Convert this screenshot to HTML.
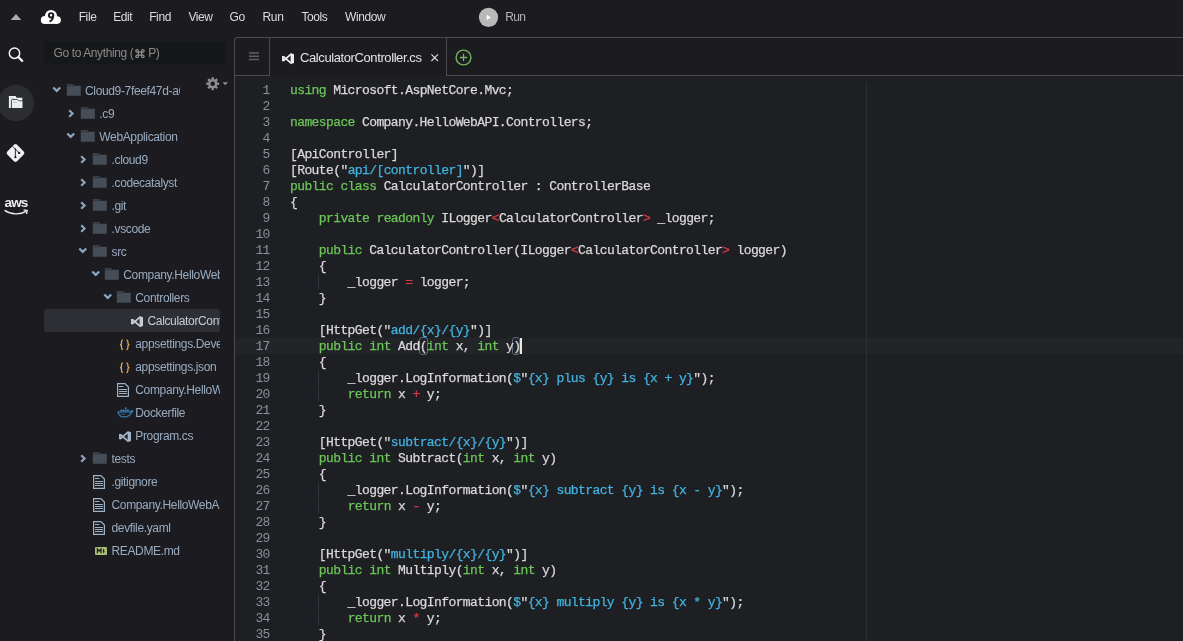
<!DOCTYPE html>
<html><head><meta charset="utf-8">
<style>
*{margin:0;padding:0;box-sizing:border-box}
html,body{width:1183px;height:641px;overflow:hidden;background:#1c1c20;font-family:"Liberation Sans",sans-serif}
.a{position:absolute}
.menu{position:absolute;top:7px;font-size:12px;line-height:20px;color:#dcdcdc;white-space:nowrap;letter-spacing:-0.4px}
#search{left:44px;top:41px;width:181px;height:23px;background:#161719;white-space:nowrap;color:#8a8a8a;font-size:12px;line-height:25px;padding-left:9.6px;letter-spacing:-0.4px}
.tt{position:absolute;height:23px;overflow:hidden;font-size:12px;line-height:23px;color:#98abc0;white-space:nowrap;letter-spacing:-0.35px}
.row{position:absolute;left:44px;width:176px;height:23px;overflow:hidden;font-size:12px;line-height:23px;color:#9fb2c6;white-space:nowrap}
.row .t{position:absolute;top:0}
.row svg{position:absolute}
#sel{left:44px;top:309px;width:176px;height:23px;background:#2d2f34;border-radius:3px}
#panel{left:234px;top:37px;width:1000px;height:700px;border-left:1px solid #4a4d56;border-top:1px solid #4a4d56;border-top-left-radius:4px;background:#1c1c20}
#editor{left:235px;top:76px;width:948px;height:565px;background:#1e1f22}
.code{position:absolute;left:290px;top:83px;font-family:"Liberation Mono",monospace;font-size:13px;letter-spacing:-0.6px;line-height:16px;color:#d9d9d9;white-space:pre;-webkit-text-stroke:0.25px currentColor}
.gut{position:absolute;left:235px;width:34.8px;top:83px;font-family:"Liberation Mono",monospace;font-size:13px;letter-spacing:-0.6px;line-height:16px;color:#8a8f9a;text-align:right;white-space:pre}
.k{color:#6cc55a}.s{color:#42b3e0}.o{color:#d83a44}
</style></head>
<body>
<div id="root" style="position:absolute;left:0;top:0;width:1183px;height:641px;will-change:transform;background:#1c1c20">
<!-- top menu -->
<svg class="a" style="left:10px;top:13px" width="12" height="8"><path d="M0.7 7.1 L6 0.9 L11.3 7.1Z" fill="#adadad"/></svg>
<svg class="a" style="left:36px;top:5px" width="30" height="24"><g fill="#fff"><circle cx="8.8" cy="14.9" r="4"/><circle cx="15" cy="11" r="6.1"/><circle cx="21.1" cy="15.1" r="3.8"/><rect x="8.8" y="11" width="12.3" height="7.9"/></g><g fill="none" stroke="#1c1c20" stroke-width="1.9"><circle cx="15.1" cy="10.3" r="2.2"/><path d="M17.2 10.4 C17.2 13.4 15.9 15.4 13.5 16.7"/></g></svg>
<div class="menu" style="left:78.7px">File</div>
<div class="menu" style="left:113.2px">Edit</div>
<div class="menu" style="left:149.2px">Find</div>
<div class="menu" style="left:188.4px">View</div>
<div class="menu" style="left:229.6px">Go</div>
<div class="menu" style="left:262.6px">Run</div>
<div class="menu" style="left:301.4px">Tools</div>
<div class="menu" style="left:345px">Window</div>
<svg class="a" style="left:478px;top:7px" width="21" height="21"><circle cx="10.5" cy="10.35" r="9.6" fill="#b9b9b9"/><path d="M8.7 7.7 L13.1 10.4 L8.7 13.1Z" fill="#fff"/></svg>
<div class="menu" style="left:505.2px;color:#b4b4b4;letter-spacing:-0.6px">Run</div>

<!-- left icon bar -->
<svg class="a" style="left:6px;top:44px" width="20" height="20"><circle cx="8.5" cy="9.2" r="5.2" fill="none" stroke="#f4f5f8" stroke-width="1.45"/><path d="M12.3 13 L16.2 16.9" stroke="#f4f5f8" stroke-width="2.2" stroke-linecap="round"/></svg>
<div class="a" style="left:-2px;top:85px;width:36px;height:36px;border-radius:18px;background:#2c2d31"></div>
<svg class="a" style="left:4px;top:90px" width="24" height="24"><path d="M4.9 6 H11.6 L12.6 7.7 H18.3 V18 H4.9Z" fill="#f0f1f5"/><path d="M7.4 18.3 V10.6 Q7.4 9.6 8.4 9.6 H13.4 L14.4 10.9 H18.8" fill="none" stroke="#2c2d31" stroke-width="0.9"/><path d="M8 10.1 H13.4 L14.4 11.4 H18.3 V18 H8Z" fill="#e9ecf3"/><path d="M6.2 8.3 H10" stroke="#a9acb3" stroke-width="0.7"/><path d="M9.6 12.4 H12.8" stroke="#a9acb3" stroke-width="0.7"/></svg>
<svg class="a" style="left:3px;top:141px" width="26" height="26"><rect x="5.6" y="5.1" width="13.8" height="13.8" rx="2.2" transform="rotate(45 12.5 12)" fill="#eef0f5"/><path d="M9.6 5.3 L12.4 8.1 V16.2 M12.4 8.1 L16.2 12" fill="none" stroke="#1c1c20" stroke-width="0.9"/><circle cx="12.4" cy="16.2" r="1.1" fill="#1c1c20"/><circle cx="16.1" cy="11.9" r="1.2" fill="#1c1c20"/><circle cx="12.4" cy="8.3" r="0.8" fill="#1c1c20"/></svg>
<div class="a" style="left:4.6px;top:194.6px;font-size:13.5px;line-height:16px;color:#eceef3;letter-spacing:-0.9px;font-weight:bold">aws</div>
<svg class="a" style="left:3px;top:208px" width="26" height="10"><path d="M1.6 2.4 C8 6.8 17 7 23 3.4" fill="none" stroke="#eceef3" stroke-width="1.4"/><path d="M20.6 1.9 L24.2 2.6 L23.5 6" fill="none" stroke="#eceef3" stroke-width="1.3"/></svg>

<!-- search -->
<div id="search" class="a">Go to Anything (</div>
<svg class="a" style="left:134.6px;top:48.6px" width="10" height="9" viewBox="0 0 10 9"><g fill="none" stroke="#8e8e8e" stroke-width="1.2"><path d="M3.3 3.2 H6.6 V6.2 H3.3Z"/><path d="M3.3 3.2 V2.1 A1.25 1.25 0 1 0 2.1 3.2 H3.3"/><path d="M6.6 3.2 V2.1 A1.25 1.25 0 1 1 7.8 3.2 H6.6"/><path d="M3.3 6.2 V7.3 A1.25 1.25 0 1 1 2.1 6.2 H3.3"/><path d="M6.6 6.2 V7.3 A1.25 1.25 0 1 0 7.8 6.2 H6.6"/></g></svg>
<div class="a" style="left:148.2px;top:41px;height:23px;color:#8a8a8a;font-size:12px;line-height:25px;letter-spacing:-0.4px;white-space:nowrap">P)</div>
<!-- gear -->
<svg class="a" style="left:205px;top:76px" width="26" height="16" viewBox="0 0 26 16"><g transform="translate(7.7,7.7)" fill="#8e8e8e"><circle r="4.6"/><rect x="-1.2" y="-6.4" width="2.4" height="12.8"/><rect x="-1.2" y="-6.4" width="2.4" height="12.8" transform="rotate(45)"/><rect x="-1.2" y="-6.4" width="2.4" height="12.8" transform="rotate(90)"/><rect x="-1.2" y="-6.4" width="2.4" height="12.8" transform="rotate(135)"/><circle r="2.3" fill="#1c1c20"/></g><path d="M17.5 6.3 H23 L20.25 9.3Z" fill="#8e8e8e"/></svg>

<!-- tree -->
<div id="sel" class="a"></div>
<svg class="a" style="left:66.0px;top:84.2px" width="16" height="13"><path d="M0.8 0.3 H7.6 V1.8 H14.8 V11.8 H0.8Z" fill="#454d57"/><path d="M0.8 1.8 H7.6" stroke="#1c1c20" stroke-width="0.5"/></svg>
<svg class="a" style="left:52.4px;top:86.3px" width="10" height="7"><path d="M1.3 1.5 L4.75 4.9 L8.2 1.5" fill="none" stroke="#8ea6bf" stroke-width="2.2"/></svg>
<div class="a tt" style="left:85.0px;top:80px;width:95.0px">Cloud9-7feef47d-a6b0-4c2e</div>
<svg class="a" style="left:80.2px;top:107.2px" width="16" height="13"><path d="M0.8 0.3 H7.6 V1.8 H14.8 V11.8 H0.8Z" fill="#454d57"/><path d="M0.8 1.8 H7.6" stroke="#1c1c20" stroke-width="0.5"/></svg>
<svg class="a" style="left:67.8px;top:109.0px" width="8" height="9"><path d="M1.2 1.2 L4.6 4.5 L1.2 7.8" fill="none" stroke="#8ea6bf" stroke-width="2.1"/></svg>
<div class="a tt" style="left:99.3px;top:103px;width:120.7px">.c9</div>
<svg class="a" style="left:80.2px;top:130.2px" width="16" height="13"><path d="M0.8 0.3 H7.6 V1.8 H14.8 V11.8 H0.8Z" fill="#454d57"/><path d="M0.8 1.8 H7.6" stroke="#1c1c20" stroke-width="0.5"/></svg>
<svg class="a" style="left:66.2px;top:132.3px" width="10" height="7"><path d="M1.3 1.5 L4.75 4.9 L8.2 1.5" fill="none" stroke="#8ea6bf" stroke-width="2.2"/></svg>
<div class="a tt" style="left:99.3px;top:126px;width:120.7px">WebApplication</div>
<svg class="a" style="left:92.2px;top:153.2px" width="16" height="13"><path d="M0.8 0.3 H7.6 V1.8 H14.8 V11.8 H0.8Z" fill="#454d57"/><path d="M0.8 1.8 H7.6" stroke="#1c1c20" stroke-width="0.5"/></svg>
<svg class="a" style="left:79.8px;top:155.0px" width="8" height="9"><path d="M1.2 1.2 L4.6 4.5 L1.2 7.8" fill="none" stroke="#8ea6bf" stroke-width="2.1"/></svg>
<div class="a tt" style="left:111.5px;top:149px;width:108.5px">.cloud9</div>
<svg class="a" style="left:92.2px;top:176.2px" width="16" height="13"><path d="M0.8 0.3 H7.6 V1.8 H14.8 V11.8 H0.8Z" fill="#454d57"/><path d="M0.8 1.8 H7.6" stroke="#1c1c20" stroke-width="0.5"/></svg>
<svg class="a" style="left:79.8px;top:178.0px" width="8" height="9"><path d="M1.2 1.2 L4.6 4.5 L1.2 7.8" fill="none" stroke="#8ea6bf" stroke-width="2.1"/></svg>
<div class="a tt" style="left:111.5px;top:172px;width:108.5px">.codecatalyst</div>
<svg class="a" style="left:92.2px;top:199.2px" width="16" height="13"><path d="M0.8 0.3 H7.6 V1.8 H14.8 V11.8 H0.8Z" fill="#454d57"/><path d="M0.8 1.8 H7.6" stroke="#1c1c20" stroke-width="0.5"/></svg>
<svg class="a" style="left:79.8px;top:201.0px" width="8" height="9"><path d="M1.2 1.2 L4.6 4.5 L1.2 7.8" fill="none" stroke="#8ea6bf" stroke-width="2.1"/></svg>
<div class="a tt" style="left:111.5px;top:195px;width:108.5px">.git</div>
<svg class="a" style="left:92.2px;top:222.2px" width="16" height="13"><path d="M0.8 0.3 H7.6 V1.8 H14.8 V11.8 H0.8Z" fill="#454d57"/><path d="M0.8 1.8 H7.6" stroke="#1c1c20" stroke-width="0.5"/></svg>
<svg class="a" style="left:79.8px;top:224.0px" width="8" height="9"><path d="M1.2 1.2 L4.6 4.5 L1.2 7.8" fill="none" stroke="#8ea6bf" stroke-width="2.1"/></svg>
<div class="a tt" style="left:111.5px;top:218px;width:108.5px">.vscode</div>
<svg class="a" style="left:92.2px;top:245.2px" width="16" height="13"><path d="M0.8 0.3 H7.6 V1.8 H14.8 V11.8 H0.8Z" fill="#454d57"/><path d="M0.8 1.8 H7.6" stroke="#1c1c20" stroke-width="0.5"/></svg>
<svg class="a" style="left:78.2px;top:247.3px" width="10" height="7"><path d="M1.3 1.5 L4.75 4.9 L8.2 1.5" fill="none" stroke="#8ea6bf" stroke-width="2.2"/></svg>
<div class="a tt" style="left:111.5px;top:241px;width:108.5px">src</div>
<svg class="a" style="left:103.8px;top:268.2px" width="16" height="13"><path d="M0.8 0.3 H7.6 V1.8 H14.8 V11.8 H0.8Z" fill="#454d57"/><path d="M0.8 1.8 H7.6" stroke="#1c1c20" stroke-width="0.5"/></svg>
<svg class="a" style="left:90.5px;top:270.3px" width="10" height="7"><path d="M1.3 1.5 L4.75 4.9 L8.2 1.5" fill="none" stroke="#8ea6bf" stroke-width="2.2"/></svg>
<div class="a tt" style="left:123.3px;top:264px;width:96.7px">Company.HelloWebAPI</div>
<svg class="a" style="left:116.2px;top:291.2px" width="16" height="13"><path d="M0.8 0.3 H7.6 V1.8 H14.8 V11.8 H0.8Z" fill="#454d57"/><path d="M0.8 1.8 H7.6" stroke="#1c1c20" stroke-width="0.5"/></svg>
<svg class="a" style="left:102.8px;top:293.3px" width="10" height="7"><path d="M1.3 1.5 L4.75 4.9 L8.2 1.5" fill="none" stroke="#8ea6bf" stroke-width="2.2"/></svg>
<div class="a tt" style="left:135.3px;top:287px;width:84.7px">Controllers</div>
<svg class="a" style="left:130.1px;top:314.5px" width="14" height="14"><g transform="translate(1,1)"><path d="M8.6 0 L12 1.3 V9.9 L8.6 11.2Z" fill="#c8ccd3"/><rect x="0" y="3" width="1.9" height="5.3" fill="#c8ccd3"/><path d="M9 1.1 L1.3 7.9 M9 10.1 L1.3 3.3" stroke="#c8ccd3" stroke-width="1.8"/></g></svg>
<div class="a tt" style="left:147.5px;top:310px;width:72.5px;color:#c9cdd3">CalculatorController.cs</div>
<svg class="a" style="left:119.1px;top:339.2px" width="12" height="12" viewBox="0 0 12 12"><path d="M4 0.8 C2.7 0.8 2.5 1.5 2.5 2.8 V4.3 C2.5 5.2 2 5.6 1 5.7 C2 5.8 2.5 6.2 2.5 7.1 V8.6 C2.5 9.9 2.7 10.6 4 10.6 M7.4 0.8 C8.7 0.8 8.9 1.5 8.9 2.8 V4.3 C8.9 5.2 9.4 5.6 10.4 5.7 C9.4 5.8 8.9 6.2 8.9 7.1 V8.6 C8.9 9.9 8.7 10.6 7.4 10.6" fill="none" stroke="#e0a95e" stroke-width="1.25"/></svg>
<div class="a tt" style="left:135.3px;top:333px;width:84.7px">appsettings.Development.json</div>
<svg class="a" style="left:119.1px;top:362.2px" width="12" height="12" viewBox="0 0 12 12"><path d="M4 0.8 C2.7 0.8 2.5 1.5 2.5 2.8 V4.3 C2.5 5.2 2 5.6 1 5.7 C2 5.8 2.5 6.2 2.5 7.1 V8.6 C2.5 9.9 2.7 10.6 4 10.6 M7.4 0.8 C8.7 0.8 8.9 1.5 8.9 2.8 V4.3 C8.9 5.2 9.4 5.6 10.4 5.7 C9.4 5.8 8.9 6.2 8.9 7.1 V8.6 C8.9 9.9 8.7 10.6 7.4 10.6" fill="none" stroke="#e0a95e" stroke-width="1.25"/></svg>
<div class="a tt" style="left:135.3px;top:356px;width:84.7px">appsettings.json</div>
<svg class="a" style="left:116px;top:381px" width="15" height="17"><path d="M1.6 2.6 H8.9 L12.4 6.1 V15.4 H1.6Z" fill="none" stroke="#9fb3c7" stroke-width="1.2"/><path d="M3 5.5 H7.4 M3 8.5 H11 M3 10.5 H11 M3 12.5 H11" stroke="#9fb3c7" stroke-width="1"/></svg>
<div class="a tt" style="left:135.3px;top:379px;width:84.7px">Company.HelloWebAPI.csproj</div>
<svg class="a" style="left:116.7px;top:405.5px" width="17" height="12" viewBox="0 0 17 12"><path d="M1 5.8 H13.3 C13.9 4.8 15 4.6 15.9 5 C15.6 5.8 15 6.2 14.4 6.2 C13.4 9.2 10.6 10.9 7 10.9 C3.8 10.9 1.6 8.8 1 5.8Z" fill="none" stroke="#3176aa" stroke-width="1.3"/><path d="M3.2 8 C5 8.6 7 8.4 8.6 7.6" fill="none" stroke="#2a6594" stroke-width="0.8"/><g fill="#3a82b8"><rect x="3.4" y="3.6" width="1.8" height="1.6"/><rect x="5.6" y="3.6" width="1.8" height="1.6"/><rect x="7.8" y="3.6" width="1.8" height="1.6"/><rect x="7.8" y="1.4" width="1.8" height="1.6"/><rect x="10" y="3.6" width="1.8" height="1.6"/></g></svg>
<div class="a tt" style="left:135.3px;top:402px;width:84.7px">Dockerfile</div>
<svg class="a" style="left:117.9px;top:429.5px" width="14" height="14"><g transform="translate(1,1)"><path d="M8.6 0 L12 1.3 V9.9 L8.6 11.2Z" fill="#a2b5c9"/><rect x="0" y="3" width="1.9" height="5.3" fill="#a2b5c9"/><path d="M9 1.1 L1.3 7.9 M9 10.1 L1.3 3.3" stroke="#a2b5c9" stroke-width="1.8"/></g></svg>
<div class="a tt" style="left:135.3px;top:425px;width:84.7px">Program.cs</div>
<svg class="a" style="left:92.2px;top:452.2px" width="16" height="13"><path d="M0.8 0.3 H7.6 V1.8 H14.8 V11.8 H0.8Z" fill="#454d57"/><path d="M0.8 1.8 H7.6" stroke="#1c1c20" stroke-width="0.5"/></svg>
<svg class="a" style="left:79.8px;top:454.0px" width="8" height="9"><path d="M1.2 1.2 L4.6 4.5 L1.2 7.8" fill="none" stroke="#8ea6bf" stroke-width="2.1"/></svg>
<div class="a tt" style="left:111.5px;top:448px;width:108.5px">tests</div>
<svg class="a" style="left:92px;top:473px" width="15" height="17"><path d="M1.6 2.6 H8.9 L12.4 6.1 V15.4 H1.6Z" fill="none" stroke="#9fb3c7" stroke-width="1.2"/><path d="M3 5.5 H7.4 M3 8.5 H11 M3 10.5 H11 M3 12.5 H11" stroke="#9fb3c7" stroke-width="1"/></svg>
<div class="a tt" style="left:111.5px;top:471px;width:108.5px">.gitignore</div>
<svg class="a" style="left:92px;top:496px" width="15" height="17"><path d="M1.6 2.6 H8.9 L12.4 6.1 V15.4 H1.6Z" fill="none" stroke="#9fb3c7" stroke-width="1.2"/><path d="M3 5.5 H7.4 M3 8.5 H11 M3 10.5 H11 M3 12.5 H11" stroke="#9fb3c7" stroke-width="1"/></svg>
<div class="a tt" style="left:111.5px;top:494px;width:108.5px">Company.HelloWebAPI.sln</div>
<svg class="a" style="left:92px;top:519px" width="15" height="17"><path d="M1.6 2.6 H8.9 L12.4 6.1 V15.4 H1.6Z" fill="none" stroke="#9fb3c7" stroke-width="1.2"/><path d="M3 5.5 H7.4 M3 8.5 H11 M3 10.5 H11 M3 12.5 H11" stroke="#9fb3c7" stroke-width="1"/></svg>
<div class="a tt" style="left:111.5px;top:517px;width:108.5px">devfile.yaml</div>
<svg class="a" style="left:95.2px;top:546.5px" width="13" height="9" viewBox="0 0 13 9"><rect x="0" y="0" width="12" height="8" rx="1" fill="#aabd74"/><path d="M2.4 6.2 V2 L4.2 4 L6 2 V6.2" fill="none" stroke="#1c1c20" stroke-width="1.2"/><path d="M8.6 2 V4.6" stroke="#1c1c20" stroke-width="1.1"/><path d="M7.3 4.2 H9.9 L8.6 6.3Z" fill="#1c1c20"/></svg>
<div class="a tt" style="left:111.5px;top:540px;width:108.5px">README.md</div>


<!-- editor panel -->
<div id="panel" class="a"></div>
<div id="editor" class="a"></div>
<div class="a" style="left:235px;top:338px;width:948px;height:16px;background:#222428"></div>
<div class="a" style="left:866px;top:82px;width:1px;height:559px;background:#2e2f31"></div>
<div class="a" style="left:269px;top:38px;width:1px;height:38px;background:#4a4d56"></div>
<div class="a" style="left:446px;top:38px;width:1px;height:38px;background:#4a4d56"></div>
<div class="a" style="left:235px;top:75px;width:35px;height:1px;background:#4a4d56"></div>
<div class="a" style="left:447px;top:75px;width:736px;height:1px;background:#4a4d56"></div>
<svg class="a" style="left:248px;top:51px" width="12" height="10"><path d="M0.9 2 H11 M0.9 5.2 H11 M0.9 8.5 H11" stroke="#5d6066" stroke-width="1.5"/></svg>
<svg class="a" style="left:281px;top:51.6px" width="14" height="14"><g transform="translate(1,1)"><path d="M8.6 0 L12 1.3 V9.9 L8.6 11.2Z" fill="#ececec"/><rect x="0" y="3" width="1.9" height="5.3" fill="#ececec"/><path d="M9 1.1 L1.3 7.9 M9 10.1 L1.3 3.3" stroke="#ececec" stroke-width="1.8"/></g></svg>
<div class="a" style="left:300px;top:48px;font-size:13px;line-height:20px;color:#e4e4e4;letter-spacing:-0.4px;white-space:nowrap">CalculatorController.cs</div>
<svg class="a" style="left:430px;top:53px" width="10" height="10"><path d="M1.4 1.4 L8 8 M8 1.4 L1.4 8" stroke="#e0e0e0" stroke-width="1.1"/></svg>
<svg class="a" style="left:454px;top:48px" width="19" height="19"><circle cx="9.5" cy="9.5" r="7.4" fill="none" stroke="#74b35b" stroke-width="1.4"/><path d="M9.5 5.8 V13.2 M5.8 9.5 H13.2" stroke="#74b35b" stroke-width="1.3"/></svg>
<!-- editor decorations -->
<div class="a" style="left:318px;top:274px;width:1px;height:15px;background:#2b3540"></div>
<div class="a" style="left:318px;top:370px;width:1px;height:15px;background:#2b3540"></div>
<div class="a" style="left:318px;top:386px;width:1px;height:15px;background:#2b3540"></div>
<div class="a" style="left:318px;top:482px;width:1px;height:15px;background:#2b3540"></div>
<div class="a" style="left:318px;top:498px;width:1px;height:15px;background:#2b3540"></div>
<div class="a" style="left:318px;top:594px;width:1px;height:15px;background:#2b3540"></div>
<div class="a" style="left:318px;top:610px;width:1px;height:15px;background:#2b3540"></div>
<div class="a" style="left:419px;top:337px;width:9px;height:18px;border:1px solid #5a6878;border-radius:3px"></div>
<div class="a" style="left:512px;top:337px;width:8px;height:18px;border:1px solid #5a6878;border-radius:3px"></div>
<div class="a" style="left:520px;top:338px;width:2px;height:16px;background:#e8e8e8"></div>

<div class="gut">1
2
3
4
5
6
7
8
9
10
11
12
13
14
15
16
17
18
19
20
21
22
23
24
25
26
27
28
29
30
31
32
33
34
35</div>
<div class="code"><span class="k">using</span> Microsoft.AspNetCore.Mvc;

<span class="k">namespace</span> Company.HelloWebAPI.Controllers;

[ApiController]
[Route("<span class="s">api/[controller]</span>")]
<span class="k">public</span> <span class="k">class</span> CalculatorController : ControllerBase
{
    <span class="k">private</span> <span class="k">readonly</span> ILogger<span class="o">&lt;</span>CalculatorController<span class="o">&gt;</span> _logger;

    <span class="k">public</span> CalculatorController(ILogger<span class="o">&lt;</span>CalculatorController<span class="o">&gt;</span> logger)
    {
        _logger <span class="o">=</span> logger;
    }

    [HttpGet("<span class="s">add/{x}/{y}</span>")]
    <span class="k">public</span> <span class="k">int</span> Add(<span class="k">int</span> x, <span class="k">int</span> y)
    {
        _logger.LogInformation(<span class="s">$</span>"<span class="s">{x} plus {y} is {x + y}</span>");
        <span class="k">return</span> x <span class="o">+</span> y;
    }

    [HttpGet("<span class="s">subtract/{x}/{y}</span>")]
    <span class="k">public</span> <span class="k">int</span> Subtract(<span class="k">int</span> x, <span class="k">int</span> y)
    {
        _logger.LogInformation(<span class="s">$</span>"<span class="s">{x} subtract {y} is {x - y}</span>");
        <span class="k">return</span> x <span class="o">-</span> y;
    }

    [HttpGet("<span class="s">multiply/{x}/{y}</span>")]
    <span class="k">public</span> <span class="k">int</span> Multiply(<span class="k">int</span> x, <span class="k">int</span> y)
    {
        _logger.LogInformation(<span class="s">$</span>"<span class="s">{x} multiply {y} is {x * y}</span>");
        <span class="k">return</span> x <span class="o">*</span> y;
    }</div>


</div>
</body></html>
